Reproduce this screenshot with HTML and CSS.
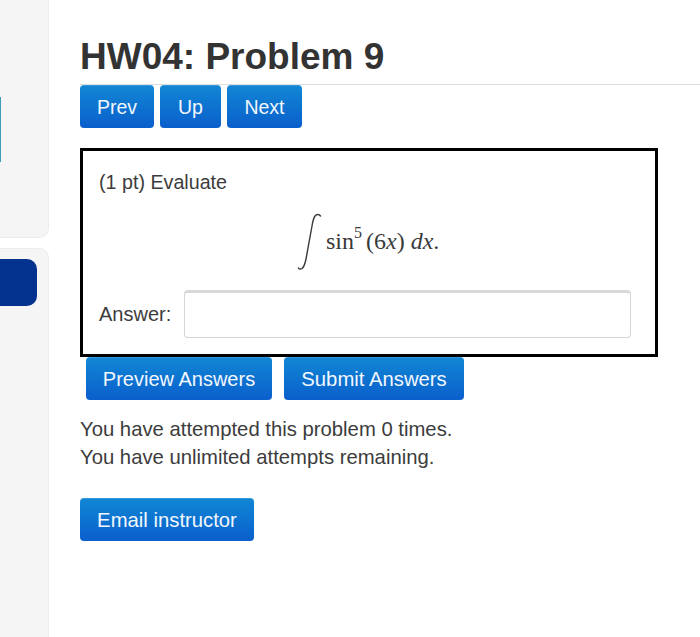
FILE: index.html
```html
<!DOCTYPE html>
<html lang="en">
<head>
<meta charset="utf-8">
<title>HW04: Problem 9</title>
<link rel="stylesheet" href="styles.css">
</head>
<body>
<div class="page">
  <aside class="sidebar">
    <div class="well well-top"><div class="teal-bar"></div></div>
    <div class="well well-bottom"><div class="blue-block"></div></div>
  </aside>
  <main class="main">
    <h1 class="title">HW04: Problem 9</h1>
    <nav class="nav-row">
      <a class="btn btn-prev">Prev</a>
      <a class="btn btn-up">Up</a>
      <a class="btn btn-next">Next</a>
    </nav>
    <section class="problem">
      <p class="prompt">(1 pt) Evaluate</p>
      <div class="math">
        <svg class="integral" width="26" height="58" viewBox="0 0 26 58" aria-hidden="true">
          <path d="M24.500 3C23 1 20.500 1 19 3C17.500 5 16.800 8 16 13L10 46C9 51 8 54 6 55.500C4.500 56.500 3 56 2.500 55" fill="none" stroke="#3a3a3a" stroke-width="1.400" stroke-linecap="round"/>
        </svg>
        <span class="formula"><span class="fn">sin</span><sup class="exp">5</sup><span class="paren">(6<i>x</i>)</span> <i>dx</i>.</span>
      </div>
      <div class="answer-row">
        <label class="answer-label" for="answer">Answer:</label>
        <input class="answer-input" id="answer" type="text">
      </div>
    </section>
    <div class="submit-row">
      <a class="btn btn-preview">Preview Answers</a>
      <a class="btn btn-submit">Submit Answers</a>
    </div>
    <p class="attempts">You have attempted this problem 0 times.<br>You have unlimited attempts remaining.</p>
    <a class="btn btn-email">Email instructor</a>
  </main>
</div>
</body>
</html>
```
FILE: styles.css
```css
* { box-sizing: border-box; }
html, body { margin: 0; padding: 0; height: 637px; overflow: hidden; background: #fff; }
body { font-family: "Liberation Sans", Arial, sans-serif; color: #3c3c3c; }
.page { display: flex; width: 700px; height: 637px; }
.sidebar { width: 49px; flex: none; display: flex; flex-direction: column; background: #fff; }
.well { background: #f5f5f6; border: 1px solid #ececec; border-left: 0; width: 49px; }
.well-top { height: 238px; padding-top: 97px; border-top: 0; border-radius: 0 0 10px 0; }
.teal-bar { width: 1px; height: 65px; background: #3f9cb8; }
.well-bottom { margin-top: 10px; flex: 1; padding-top: 10px; border-bottom: 0; border-radius: 0 10px 0 0; }
.blue-block { width: 37px; height: 47px; background: #04338f; border-radius: 0 10px 10px 0; }
.main { flex: 1; min-width: 0; padding: 36px 0 0 31px; }
.title { margin: 0; height: 49px; font-size: 37px; line-height: 41px; font-weight: 700; color: #333; border-bottom: 1px solid #ddd; }
.nav-row { display: flex; gap: 6px; height: 63px; }
.btn { display: block; height: 43px; border-radius: 4px; background: linear-gradient(#1187d4, #0a5fcc); color: #f2f7fd; font-size: 20px; line-height: 45px; text-align: center; box-shadow: inset 0 1px 0 rgba(255,255,255,.15); }
.btn-prev { width: 74px; font-size: 19.500px; }
.btn-up { width: 61px; font-size: 19.500px; }
.btn-next { width: 75px; font-size: 19.500px; }
.problem { width: 578px; height: 209px; border: 3px solid #000; padding: 20px 16px 0 16px; }
.prompt { margin: 0; font-size: 19.700px; line-height: 23px; }
.math { display: flex; align-items: center; height: 66px; margin-top: 15px; padding-left: 197px; }
.integral { flex: none; }
.formula { font-family: "Liberation Serif", "Times New Roman", serif; font-size: 24px; color: #3a3a3a; margin: 0 0 2px 4px; white-space: nowrap; }
.exp { font-size: 16px; line-height: 0; vertical-align: 11px; }
.paren { margin-left: 4px; }
.answer-row { display: flex; align-items: center; gap: 13px; margin-top: 15px; }
.answer-label { font-size: 20px; }
.answer-input { width: 447px; height: 48px; border: 1px solid #d6d6d6; border-top: 3px solid #d8d8d8; border-radius: 4px; background: #fff; }
.submit-row { display: flex; gap: 12px; padding-left: 6px; }
.btn-preview { width: 186px; }
.btn-submit { width: 180px; font-size: 20.300px; }
.attempts { margin: 15px 0 0; font-size: 20.300px; line-height: 28px; }
.btn-email { width: 174px; margin-top: 27px; font-size: 20.300px; }
```
